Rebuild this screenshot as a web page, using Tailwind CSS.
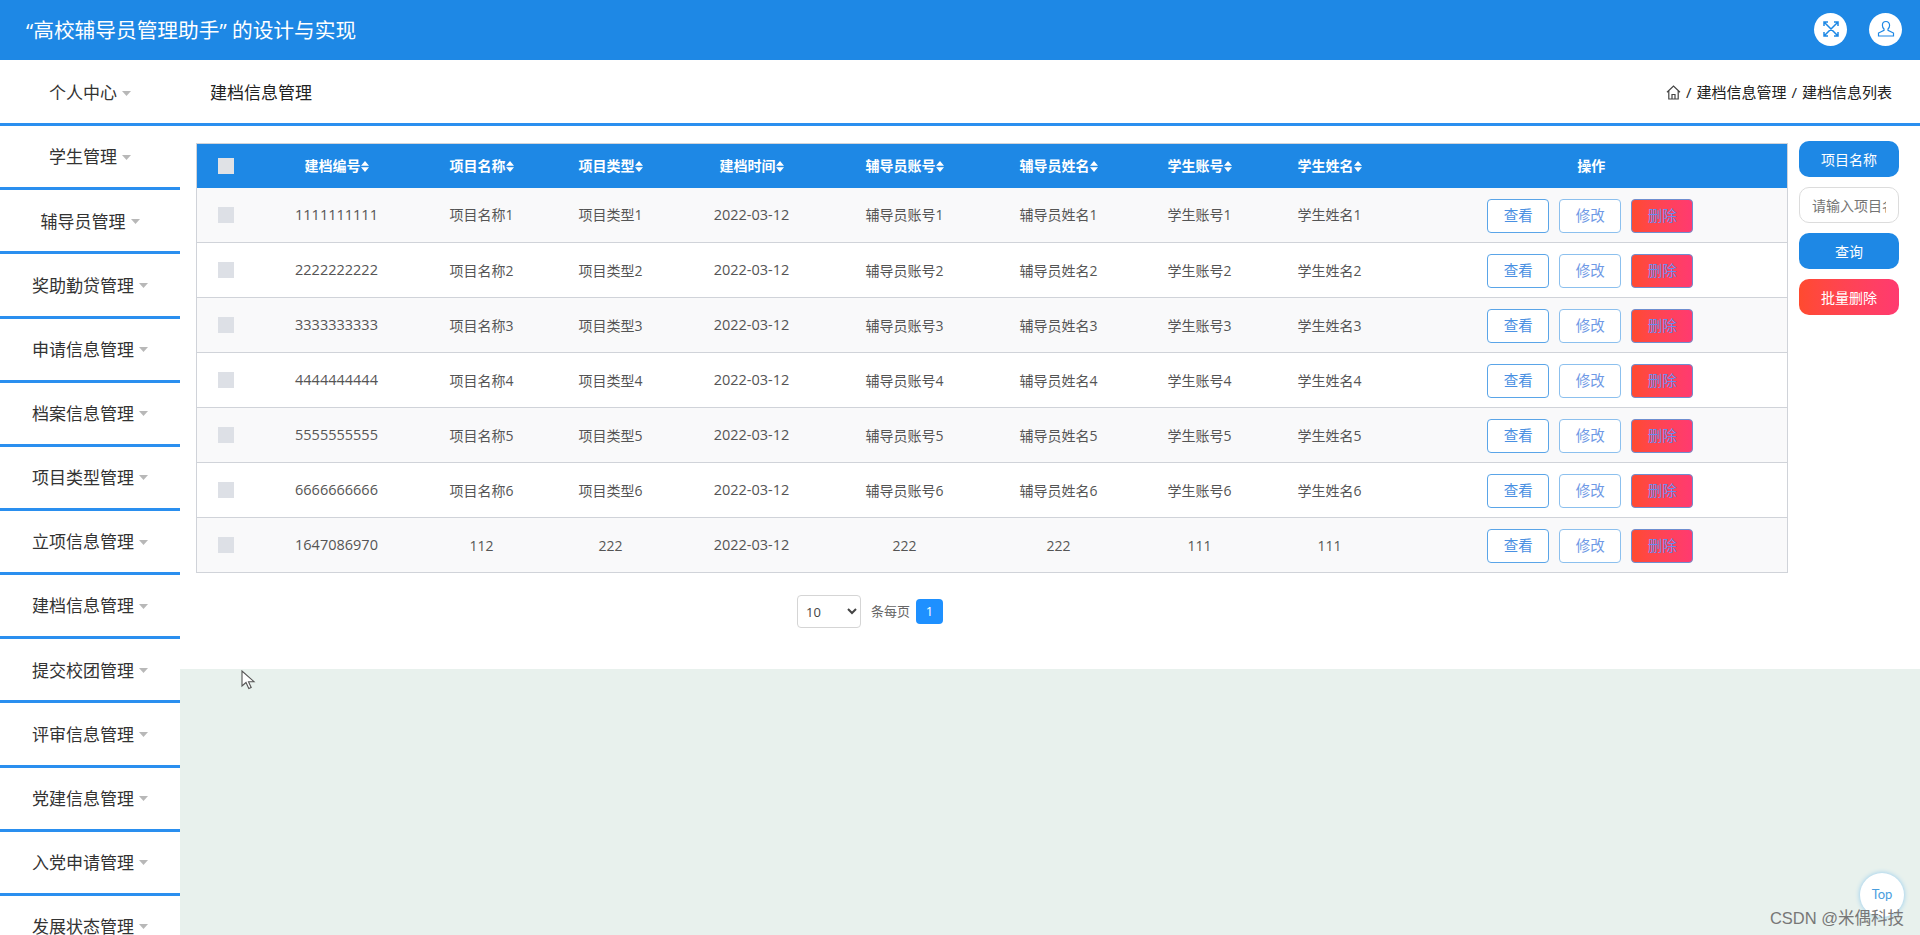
<!DOCTYPE html>
<html>

<head>
    <meta charset="UTF-8">
    <title>建档信息管理</title>
    <script src="https://cdn.jsdelivr.net/npm/@tailwindcss/browser@4"></script>
</head>

<body class="relative h-screen overflow-hidden bg-[#e8f1ed] text-[#333] font-['Open_Sans','Noto_Sans_CJK_SC',sans-serif]">
    <header class="h-[60px] bg-[#1e88e5] flex items-center pl-[26px] pr-[18px]">
        <h1 class="text-[20.700px] text-white flex-1 whitespace-nowrap pt-[2px]">“高校辅导员管理助手” 的设计与实现</h1>
        <div class="flex items-center gap-[22px] pb-[2px]">
            <div class="w-[33px] h-[33px] rounded-full bg-white flex items-center justify-center">
                <svg width="18" height="18" viewBox="0 0 18 18" fill="none" stroke="#1e88e5" stroke-width="1.5">
                    <path d="M2 6V2h4M12 2h4v4M16 12v4h-4M6 16H2v-4M2.500 2.500l13 13M15.500 2.500l-13 13" />
                </svg>
            </div>
            <div class="w-[33px] h-[33px] rounded-full bg-white flex items-center justify-center">
                <svg width="18" height="18" viewBox="0 0 18 18" fill="none" stroke="#1e88e5" stroke-width="1.200">
                    <path d="M9 1.500c-2.200 0-3.600 1.600-3.600 3.800 0 1.500.7 2.900 1.600 3.700v1.300L1.500 13v3h15v-3L11 10.300V9c.9-.8 1.600-2.200 1.600-3.700 0-2.200-1.400-3.800-3.600-3.800z" />
                </svg>
            </div>
        </div>
    </header>

    <div class="flex h-[875px]">
        <nav id="menu" class="w-[180px] shrink-0 bg-white pt-[2px] overflow-hidden text-[17px]"></nav>

        <main class="flex-1 min-w-0 self-start bg-white h-[609px]">
            <div class="h-[66px] border-b-[3px] border-[#2a8fef] flex items-center justify-between pt-[2px] pl-[30px] pr-[28px]">
                <span class="text-[17px] text-[#222]">建档信息管理</span>
                <div class="flex items-center gap-[5px] text-[15px] text-[#222]">
                    <svg width="15" height="15" viewBox="0 0 15 15" fill="none" stroke="#444" stroke-width="1.200">
                        <path d="M1 7.200 7.500 1 14 7.200M2.800 6v8h9.400V6M6 14V9.500h3V14" />
                    </svg>
                    <span>/</span><span>建档信息管理</span><span>/</span><span>建档信息列表</span>
                </div>
            </div>

            <div class="flex pl-4 pr-[21px] pt-[15px]">
                <div class="w-[1592px] shrink-0 pt-[2px]">
                    <table class="w-full table-fixed border-collapse text-[14px] text-[#555] border border-[#d0d3d9]">
                        <colgroup>
                            <col class="w-[59px]"><col class="w-[162px]"><col class="w-[128px]"><col class="w-[130px]"><col class="w-[152px]">
                            <col class="w-[154px]"><col class="w-[154px]"><col class="w-[128px]"><col class="w-[132px]"><col>
                        </colgroup>
                        <thead>
                            <tr id="head" class="h-[44px] bg-[#1e88e5] text-white text-[14px] font-bold"></tr>
                        </thead>
                        <tbody id="rows"></tbody>
                    </table>

                    <div class="flex items-center ml-[601px] mt-[22px] text-[13px] text-[#666]">
                        <select class="w-16 h-[33px] border border-[#d5d5d5] rounded-[4px] bg-white text-[#444] text-[13px] pl-1 mr-[10px]">
                            <option>10</option>
                        </select>
                        <span class="mr-[6px]">条每页</span>
                        <span class="w-[27px] h-[25px] rounded-[4px] bg-[#1e90ff] text-white flex items-center justify-center">1</span>
                    </div>
                </div>

                <div class="ml-[11px] w-[100px] shrink-0 flex flex-col gap-[10px] text-[14px]">
                    <div class="h-9 rounded-[10px] bg-[#1e88e5] text-white flex items-center justify-center">项目名称</div>
                    <input class="h-9 w-full rounded-[10px] border border-[#dcdcdc] bg-white px-3 text-[14px] placeholder:text-[#757575]" placeholder="请输入项目名称">
                    <button class="h-9 rounded-[10px] bg-[#1e88e5] text-white">查询</button>
                    <button class="h-9 rounded-[10px] bg-gradient-to-r from-[#ff4a2f] to-[#ff3a70] text-white">批量删除</button>
                </div>
            </div>
        </main>
    </div>

    <svg class="absolute left-[241px] top-[670px]" width="16" height="20" viewBox="0 0 16 20" fill="#fff" stroke="#555" stroke-width="1.100">
        <path d="M1 1v15l4-3.500 2.800 6 2.400-1.100-2.700-5.700H13z" />
    </svg>

    <div class="absolute left-[1860px] top-[873px] w-[44px] h-[44px] rounded-full bg-white shadow-[0_0_5px_#8cc8ee] flex items-center justify-center text-[13px] text-[#4a9ede] font-['Lato',sans-serif]">Top</div>
    <div class="absolute right-4 top-[906px] text-[16.500px] text-[#777] whitespace-nowrap font-['Liberation_Sans','Noto_Sans_CJK_SC',sans-serif]">CSDN @米偶科技</div>

    <script>
        const menu = ['个人中心', '学生管理', '辅导员管理', '奖助勤贷管理', '申请信息管理', '档案信息管理', '项目类型管理', '立项信息管理', '建档信息管理', '提交校团管理', '评审信息管理', '党建信息管理', '入党申请管理', '发展状态管理']
        document.getElementById('menu').innerHTML = menu.map(name => `
            <div class="h-[64.150px] shrink-0 pt-[1px] border-b-[3px] border-[#2a8fef] flex items-center justify-center gap-[5px] text-[#333]">
                <span>${name}</span>
                <svg width="9" height="5" viewBox="0 0 9 5" fill="#b8b8b8"><path d="M0 0h9L4.500 5z" /></svg>
            </div>`).join('')

        const sort = `<svg class="inline-block align-[-1px]" width="8" height="11" viewBox="0 0 8 11" fill="#fff"><path d="M0 4.800 4 0l4 4.800zM0 6.200h8L4 11z" /></svg>`
        const cols = ['建档编号', '项目名称', '项目类型', '建档时间', '辅导员账号', '辅导员姓名', '学生账号', '学生姓名']
        document.getElementById('head').innerHTML =
            `<th><input type="checkbox" class="appearance-none block mx-auto w-4 h-4 bg-[#e0e2e6]"></th>` +
            cols.map(c => `<th>${c}${sort}</th>`).join('') +
            `<th>操作</th>`

        const rows = [
            ['1111111111', '项目名称1', '项目类型1', '辅导员账号1', '辅导员姓名1', '学生账号1', '学生姓名1'],
            ['2222222222', '项目名称2', '项目类型2', '辅导员账号2', '辅导员姓名2', '学生账号2', '学生姓名2'],
            ['3333333333', '项目名称3', '项目类型3', '辅导员账号3', '辅导员姓名3', '学生账号3', '学生姓名3'],
            ['4444444444', '项目名称4', '项目类型4', '辅导员账号4', '辅导员姓名4', '学生账号4', '学生姓名4'],
            ['5555555555', '项目名称5', '项目类型5', '辅导员账号5', '辅导员姓名5', '学生账号5', '学生姓名5'],
            ['6666666666', '项目名称6', '项目类型6', '辅导员账号6', '辅导员姓名6', '学生账号6', '学生姓名6'],
            ['1647086970', '112', '222', '222', '222', '111', '111']
        ]
        document.getElementById('rows').innerHTML = rows.map((r, i) => `
            <tr class="h-[55px] text-center border-b border-[#d0d3d9] ${i % 2 == 0 ? 'bg-[#f9f9fa]' : 'bg-white'}">
                <td><input type="checkbox" class="appearance-none block mx-auto w-4 h-4 bg-[#dde0e6]"></td>
                <td class="text-[14.500px]">${r[0]}</td><td>${r[1]}</td><td>${r[2]}</td><td class="text-[14.500px]">2022-03-12</td>
                <td>${r[3]}</td><td>${r[4]}</td><td>${r[5]}</td><td>${r[6]}</td>
                <td>
                    <div class="flex justify-center gap-[10px] pt-[2px] pr-[2px] text-[14.500px]">
                        <button class="w-[62px] h-[34px] rounded-[4px] border border-[#5aa5e8] bg-white text-[#4a90e2]">查看</button>
                        <button class="w-[62px] h-[34px] rounded-[4px] border border-[#8cc0ee] bg-white text-[#6f9ae6]">修改</button>
                        <button class="w-[62px] h-[34px] rounded-[4px] border border-[#6f8ed0] bg-gradient-to-r from-[#ff4a2f] to-[#ff3a70] text-[#6a8cf0]">删除</button>
                    </div>
                </td>
            </tr>`).join('')
    </script>
</body>

</html>
